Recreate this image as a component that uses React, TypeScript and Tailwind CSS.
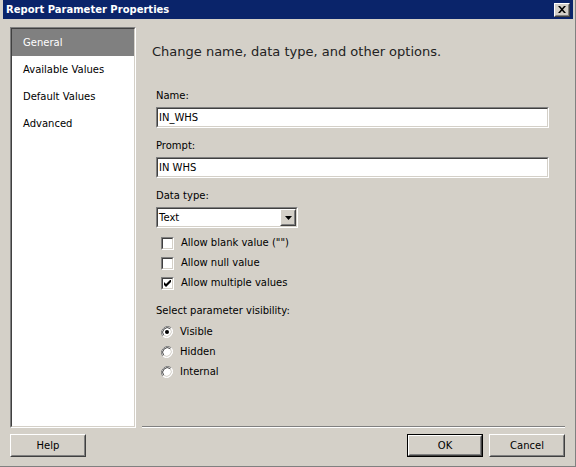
import React from "react";

const font = { fontFamily: '"DejaVu Sans", Tahoma, sans-serif' };

function Sunken({ className, children }: { className?: string; children?: React.ReactNode }) {
  return (
    <div className={"border border-t-[#808080] border-l-[#808080] border-r-white border-b-white " + (className ?? "")}>
      <div className="h-full w-full border border-t-[#404040] border-l-[#404040] border-r-[#d4d0c8] border-b-[#d4d0c8] bg-white">
        {children}
      </div>
    </div>
  );
}

function Raised({ className, children }: { className?: string; children?: React.ReactNode }) {
  return (
    <div className={"border border-t-white border-l-white border-r-[#404040] border-b-[#404040] bg-[#d4d0c8] " + (className ?? "")}>
      <div className="flex h-full w-full items-center justify-center border border-t-[#d4d0c8] border-l-[#d4d0c8] border-r-[#808080] border-b-[#808080]">
        {children}
      </div>
    </div>
  );
}

function TextField({ value }: { value: string }) {
  return (
    <Sunken className="h-[21px] w-[393px]">
      <div className="flex h-full items-center pl-[1px] text-[10px] leading-none text-black">{value}</div>
    </Sunken>
  );
}

function CheckBox({ checked, label }: { checked?: boolean; label: string }) {
  return (
    <div className="flex h-[20px] items-center pl-[19px]">
      <Sunken className="h-[13px] w-[13px] shrink-0">
        {checked && (
          <div className="flex h-full w-full items-center justify-center">
            <svg width="7" height="7" viewBox="0 0 7 7" className="block">
              <path d="M0 2 L2 4 L7 -1 L7 2 L2 7 L0 5 Z" fill="#000" />
            </svg>
          </div>
        )}
      </Sunken>
      <span className="ml-[7px] text-[10px] leading-none text-black">{label}</span>
    </div>
  );
}

function Radio({ checked, label }: { checked?: boolean; label: string }) {
  return (
    <div className="flex h-[20px] items-center pl-[19px]">
      <svg width="12" height="12" viewBox="0 0 12 12" className="shrink-0">
        <circle cx="6" cy="6" r="5.5" fill="white" />
        <path d="M10.2 1.8 A6 6 0 0 0 1.8 10.2" fill="none" stroke="#808080" strokeWidth="1" />
        <path d="M9.3 2.7 A4.7 4.7 0 0 0 2.7 9.3" fill="none" stroke="#404040" strokeWidth="1" />
        <path d="M1.8 10.2 A6 6 0 0 0 10.2 1.8" fill="none" stroke="#ffffff" strokeWidth="1" />
        <path d="M2.7 9.3 A4.7 4.7 0 0 0 9.3 2.7" fill="none" stroke="#d4d0c8" strokeWidth="1" />
        {checked && <circle cx="6" cy="6" r="2" fill="#000" />}
      </svg>
      <span className="ml-[7px] text-[10px] leading-none text-black">{label}</span>
    </div>
  );
}

function Button({ label, isDefault }: { label: string; isDefault?: boolean }) {
  const inner = (
    <Raised className="h-full w-full">
      <span className="text-[10px] leading-none text-black">{label}</span>
    </Raised>
  );
  return isDefault ? (
    <div className="h-[23px] w-[76px] border border-black">{inner}</div>
  ) : (
    <div className="h-[23px] w-[76px]">{inner}</div>
  );
}

export default function App() {
  return (
    <div
      style={font}
      className="flex h-[467px] w-[576px] flex-col border-r border-b border-r-[#808080] border-b-[#808080] bg-[#d4d0c8] pl-[3px] pr-[2px] select-none"
    >
      <div className="flex h-[19px] shrink-0 items-center justify-between bg-[#0a246a] pl-[3px] pr-[3px]">
        <span className="text-[10px] font-bold leading-none text-white">Report Parameter Properties</span>
        <Raised className="h-[14px] w-[16px]">
          <svg width="8" height="7" viewBox="0 0 8 7" className="block">
            <path d="M0 0 H2 L4 2.2 L6 0 H8 L5 3.5 L8 7 H6 L4 4.8 L2 7 H0 L3 3.5 Z" fill="#000" />
          </svg>
        </Raised>
      </div>

      <div className="flex flex-1 flex-col pl-[7px] pr-[8px] pt-[8px]">
        <div className="flex h-[401px]">
          <div className="w-[126px] shrink-0 border border-t-[#808080] border-l-[#808080] border-r-white border-b-white">
            <div className="h-full w-full border border-t-[#404040] border-l-[#404040] border-r-[#d4d0c8] border-b-[#d4d0c8] bg-white">
              <div className="flex h-[27px] items-center bg-[#808080] pl-[11px] text-[10px] text-white">General</div>
              <div className="flex h-[27px] items-center pl-[11px] text-[10px] text-black">Available Values</div>
              <div className="flex h-[27px] items-center pl-[11px] text-[10px] text-black">Default Values</div>
              <div className="flex h-[27px] items-center pl-[11px] text-[10px] text-black">Advanced</div>
            </div>
          </div>

          <div className="ml-[6px] flex flex-1 flex-col">
            <div className="flex-1">
              <div className="mt-[15px] h-[20px] pl-[10px] text-[13px] leading-[20px] text-[#222]">
                Change name, data type, and other options.
              </div>
              <div className="pl-[14px]">
                <div className="mt-[27px] h-[13px] text-[10px] leading-[13px] text-black">Name:</div>
                <div className="mt-[5px]">
                  <TextField value="IN_WHS" />
                </div>
                <div className="mt-[11px] h-[13px] text-[10px] leading-[13px] text-black">Prompt:</div>
                <div className="mt-[5px]">
                  <TextField value="IN WHS" />
                </div>
                <div className="mt-[11px] h-[13px] text-[10px] leading-[13px] text-black">Data type:</div>
                <div className="mt-[5px]">
                  <Sunken className="h-[21px] w-[142px]">
                    <div className="flex h-full items-center justify-between pl-[1px]">
                      <span className="text-[10px] leading-none text-black">Text</span>
                      <Raised className="h-[17px] w-[16px]">
                        <svg width="7" height="4" viewBox="0 0 7 4" className="block">
                          <path d="M0 0 H7 L3.5 4 Z" fill="#000" />
                        </svg>
                      </Raised>
                    </div>
                  </Sunken>
                </div>
              </div>
              <div className="mt-[5px]">
                <CheckBox label={'Allow blank value ("")'} />
                <CheckBox label="Allow null value" />
                <CheckBox checked label="Allow multiple values" />
              </div>
              <div className="mt-[11px] h-[13px] pl-[14px] text-[10px] leading-[13px] text-black">
                Select parameter visibility:
              </div>
              <div className="mt-[5px]">
                <Radio checked label="Visible" />
                <Radio label="Hidden" />
                <Radio label="Internal" />
              </div>
            </div>
            <div className="h-[2px] border-t border-b border-t-[#808080] border-b-white" />
          </div>
        </div>

        <div className="mt-[6px] flex items-center justify-between">
          <Button label="Help" />
          <div className="flex gap-[6px]">
            <Button label="OK" isDefault />
            <Button label="Cancel" />
          </div>
        </div>
      </div>
    </div>
  );
}
